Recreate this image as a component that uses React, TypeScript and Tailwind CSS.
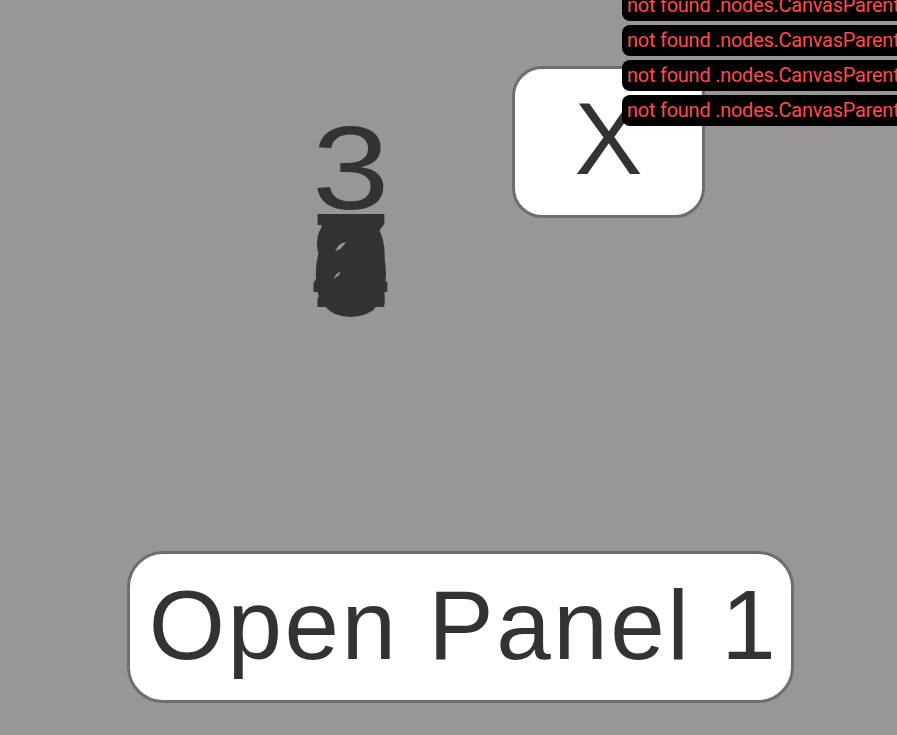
import React from "react";

const stacked = [
  { d: "0", y: 18 },
  { d: "1", y: 6 },
  { d: "2", y: 9 },
  { d: "4", y: 13 },
  { d: "5", y: 4 },
  { d: "6", y: 15 },
  { d: "7", y: 0 },
  { d: "8", y: 11 },
  { d: "9", y: 2 },
];

export default function App() {
  return (
    <div
      className="relative h-[735px] w-full overflow-hidden bg-[#989696] text-[#333333]"
      style={{ fontFamily: '"Liberation Sans", Arial, sans-serif' }}
    >
      <div className="mt-[66px] flex h-[152px] items-start">
        {/* digit column */}
        <div className="ml-[311px] mt-[43px] flex w-[80px] flex-col items-center">
          <div className="scale-x-[1.18] text-[118px] leading-none">3</div>
          <div className="relative -mt-[30px] grid h-[130px] w-full">
            {stacked.map((s) => (
              <div
                key={s.d}
                className="col-start-1 row-start-1 flex justify-center"
                style={{ marginTop: s.y }}
              >
                <span className="scale-x-[1.2] text-[118px] leading-none [-webkit-text-stroke:2px_#333333]">
                  {s.d}
                </span>
              </div>
            ))}
          </div>
        </div>
        {/* X button */}
        <div className="ml-[121px] flex h-[152px] w-[193px] shrink-0 items-center justify-center rounded-[30px] border-[3px] border-[#6e6e6e] bg-white">
          <span className="-mt-[6px] text-[102px] leading-none">X</span>
        </div>
      </div>

      <div className="ml-[127px] mt-[333px] flex h-[152px] w-[667px] items-center justify-center rounded-[36px] border-[3px] border-[#6e6e6e] bg-white">
        <span className="-mt-[4px] pl-[6px] text-[98px] leading-none tracking-[2.5px]">
          Open Panel 1
        </span>
      </div>

      {/* toast overlay */}
      <div
        className="absolute left-[622px] top-[-10px] flex w-[320px] flex-col gap-[4px]"
        style={{ fontFamily: 'Roboto, "Noto Sans", sans-serif' }}
      >
        {[0, 1, 2, 3].map((i) => (
          <div
            key={i}
            className="h-[31px] overflow-hidden whitespace-nowrap rounded-[8px] bg-black pl-[5px] text-[20px] leading-[31px] tracking-[-0.25px] text-[#ff4b4b]"
          >
            not found .nodes.CanvasParent
          </div>
        ))}
      </div>
    </div>
  );
}
